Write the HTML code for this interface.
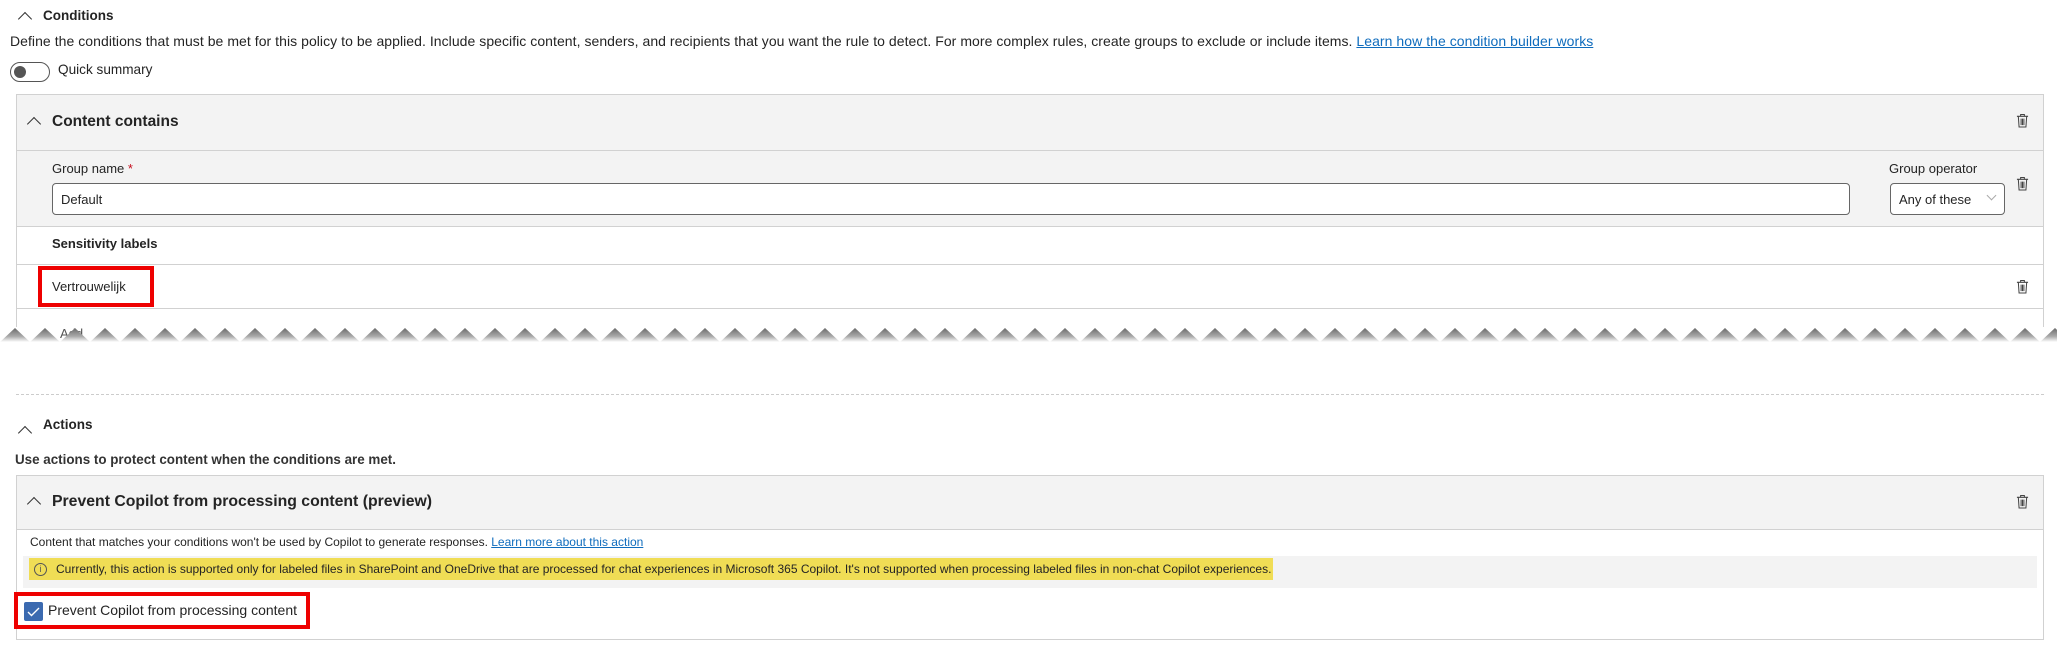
<!DOCTYPE html>
<html><head><meta charset="utf-8"><style>
*{box-sizing:border-box;margin:0;padding:0}
body{width:2057px;height:653px;background:#fff;font-family:"Liberation Sans",sans-serif;color:#242424;position:relative;overflow:hidden;font-size:13px}
.a{position:absolute;white-space:nowrap}
.b{font-weight:bold}
.chev{position:absolute;width:10px;height:10px;border-left:1.2px solid #333;border-top:1.2px solid #333;transform:rotate(45deg)}
.trash{position:absolute;width:13px;height:17px}
a{color:#0f6cbd;text-decoration:underline}
</style></head><body>
<svg width="0" height="0" style="position:absolute"><defs><g id="tr"><path d="M1 3.5h12M5 3.5V1.5h4v2M2.5 3.5l.8 11.5h7.4l.8-11.5M5.5 6v7M7 6v7M8.5 6v7" stroke="#444" stroke-width="1.1" fill="none"/></g></defs></svg>

<div class="chev" style="left:20px;top:14px"></div>
<div class="a b" style="left:43px;top:8px;font-size:13.5px">Conditions</div>
<div class="a" style="left:10px;top:33px;font-size:14px;letter-spacing:0.05px">Define the conditions that must be met for this policy to be applied. Include specific content, senders, and recipients that you want the rule to detect. For more complex rules, create groups to exclude or include items. <a>Learn how the condition builder works</a></div>
<div class="a" style="left:10px;top:62px;width:40px;height:20px;border:1px solid #555;border-radius:10px"><div style="position:absolute;left:3px;top:3px;width:12px;height:12px;border-radius:50%;background:#555"></div></div>
<div class="a" style="left:58px;top:62px;font-size:13.6px">Quick summary</div>

<div class="a" style="left:16px;top:94px;width:2028px;height:233px;border:1px solid #d1d1d1;border-bottom:none">
 <div style="position:absolute;left:0;top:0;right:0;height:56px;background:#f3f3f3;border-bottom:1px solid #d1d1d1"></div>
 <div style="position:absolute;left:0;top:56px;right:0;height:76px;background:#f3f3f3;border-bottom:1px solid #d1d1d1"></div>
 <div style="position:absolute;left:0;top:169px;right:0;border-bottom:1px solid #d1d1d1"></div>
 <div style="position:absolute;left:0;top:213px;right:0;border-bottom:1px solid #d1d1d1"></div>
</div>
<div class="chev" style="left:29px;top:119px"></div>
<div class="a b" style="left:52px;top:113px;font-size:15.5px">Content contains</div>
<svg class="trash" style="left:2016px;top:112px" viewBox="0 0 14 16"><use href="#tr"/></svg>
<div class="a" style="left:52px;top:161px;font-size:13px">Group name <span style="color:#c50f1f">*</span></div>
<div class="a" style="left:52px;top:183px;width:1798px;height:32px;border:1px solid #666;border-radius:4px;background:#fff;padding:8px 8px;font-size:13px">Default</div>
<div class="a" style="left:1889px;top:161px;font-size:13px">Group operator</div>
<div class="a" style="left:1890px;top:183px;width:115px;height:32px;border:1px solid #666;border-radius:4px;background:#fff;padding:8px 8px;font-size:13px">Any of these<span style="position:absolute;right:9px;top:8px;width:7px;height:7px;border-right:1px solid #aaa;border-bottom:1px solid #aaa;transform:rotate(45deg)"></span></div>
<svg class="trash" style="left:2016px;top:175px" viewBox="0 0 14 16"><use href="#tr"/></svg>
<div class="a b" style="left:52px;top:236px;font-size:13px">Sensitivity labels</div>
<div class="a" style="left:52px;top:279px;font-size:13px">Vertrouwelijk</div>
<div class="a" style="left:38px;top:266px;width:116px;height:41px;border:4px solid #e00"></div>
<svg class="trash" style="left:2016px;top:278px" viewBox="0 0 14 16"><use href="#tr"/></svg>
<div class="a" style="left:60px;top:326px;font-size:13px;color:#555">Add</div>

<svg class="a" style="left:0;top:326px" width="2057" height="20">
<defs><linearGradient id="g" x1="0" y1="0" x2="0" y2="1"><stop offset="0" stop-color="#6a6a6a"/><stop offset="0.6" stop-color="#aaa"/><stop offset="1" stop-color="#fff"/></linearGradient>
<pattern id="p" x="0" width="30" height="20" patternUnits="userSpaceOnUse"><path d="M0 16 L15 2 L30 16 Z" fill="url(#g)"/></pattern></defs>
<rect width="2057" height="20" fill="url(#p)"/></svg>
<div class="a" style="left:16px;top:394px;width:2028px;border-top:1.5px dashed #ccc"></div>

<div class="chev" style="left:20px;top:428px"></div>
<div class="a b" style="left:43px;top:417px;font-size:13.5px">Actions</div>
<div class="a" style="left:15px;top:452px;font-size:13.4px;font-weight:600;color:#333">Use actions to protect content when the conditions are met.</div>

<div class="a" style="left:16px;top:475px;width:2028px;height:165px;border:1px solid #d1d1d1">
 <div style="position:absolute;left:0;top:0;right:0;height:54px;background:#f3f3f3;border-bottom:1px solid #d1d1d1"></div>
 <div style="position:absolute;left:6px;top:80px;right:6px;height:32px;background:#f3f3f3"></div>
</div>
<div class="chev" style="left:29px;top:499px"></div>
<div class="a b" style="left:52px;top:493px;font-size:15.8px">Prevent Copilot from processing content (preview)</div>
<svg class="trash" style="left:2016px;top:493px" viewBox="0 0 14 16"><use href="#tr"/></svg>
<div class="a" style="left:30px;top:535px;font-size:12px">Content that matches your conditions won't be used by Copilot to generate responses. <a>Learn more about this action</a></div>
<div class="a" style="left:29px;top:558px;width:1244px;height:22px;background:#f0dd55"></div>
<div class="a" style="left:34px;top:563px;width:13px;height:13px;border:1px solid #555;border-radius:50%;font-size:9px;text-align:center;line-height:11px;color:#555">i</div>
<div class="a" style="left:56px;top:562px;font-size:12px">Currently, this action is supported only for labeled files in SharePoint and OneDrive that are processed for chat experiences in Microsoft 365 Copilot. It's not supported when processing labeled files in non-chat Copilot experiences.</div>
<div class="a" style="left:14px;top:592px;width:296px;height:37px;border:4px solid #e00;background:#fff"></div>
<div class="a" style="left:24px;top:602px;width:19px;height:19px;background:#3b6ab0;border-radius:2px"><svg width="19" height="19"><path d="M4 10l3.5 3.5L15 6" stroke="#fff" stroke-width="1.4" fill="none"/></svg></div>
<div class="a" style="left:48px;top:602px;font-size:14px">Prevent Copilot from processing content</div>
</body></html>
